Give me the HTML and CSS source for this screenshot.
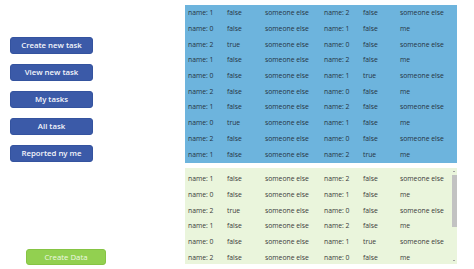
FILE: index.html
```html
<!DOCTYPE html>
<html>
<head>
<meta charset="utf-8">
<link rel="stylesheet" href="styles.css">
</head>
<body>
<div class="page">
  <aside class="sidebar">
    <button class="nav-btn">Create new task</button>
    <button class="nav-btn">View new task</button>
    <button class="nav-btn">My tasks</button>
    <button class="nav-btn">All task</button>
    <button class="nav-btn">Reported ny me</button>
    <button class="create-btn">Create Data</button>
  </aside>
  <main class="main">
    <div class="panel panel-blue">
      <div class="row"><span>name: 1</span><span>false</span><span>someone else</span><span>name: 2</span><span>false</span><span>someone else</span></div>
      <div class="row"><span>name: 0</span><span>false</span><span>someone else</span><span>name: 1</span><span>false</span><span>me</span></div>
      <div class="row"><span>name: 2</span><span>true</span><span>someone else</span><span>name: 0</span><span>false</span><span>someone else</span></div>
      <div class="row"><span>name: 1</span><span>false</span><span>someone else</span><span>name: 2</span><span>false</span><span>me</span></div>
      <div class="row"><span>name: 0</span><span>false</span><span>someone else</span><span>name: 1</span><span>true</span><span>someone else</span></div>
      <div class="row"><span>name: 2</span><span>false</span><span>someone else</span><span>name: 0</span><span>false</span><span>me</span></div>
      <div class="row"><span>name: 1</span><span>false</span><span>someone else</span><span>name: 2</span><span>false</span><span>someone else</span></div>
      <div class="row"><span>name: 0</span><span>true</span><span>someone else</span><span>name: 1</span><span>false</span><span>me</span></div>
      <div class="row"><span>name: 2</span><span>false</span><span>someone else</span><span>name: 0</span><span>false</span><span>someone else</span></div>
      <div class="row"><span>name: 1</span><span>false</span><span>someone else</span><span>name: 2</span><span>true</span><span>me</span></div>
    </div>
    <div class="panel panel-green">
      <div class="row"><span>name: 1</span><span>false</span><span>someone else</span><span>name: 2</span><span>false</span><span>someone else</span></div>
      <div class="row"><span>name: 0</span><span>false</span><span>someone else</span><span>name: 1</span><span>false</span><span>me</span></div>
      <div class="row"><span>name: 2</span><span>true</span><span>someone else</span><span>name: 0</span><span>false</span><span>someone else</span></div>
      <div class="row"><span>name: 1</span><span>false</span><span>someone else</span><span>name: 2</span><span>false</span><span>me</span></div>
      <div class="row"><span>name: 0</span><span>false</span><span>someone else</span><span>name: 1</span><span>true</span><span>someone else</span></div>
      <div class="row"><span>name: 2</span><span>false</span><span>someone else</span><span>name: 0</span><span>false</span><span>me</span></div>
      <div class="scrollbar">
        <span class="scroll-arrow scroll-up"></span>
        <span class="scroll-thumb"></span>
        <span class="scroll-arrow scroll-down"></span>
      </div>
    </div>
  </main>
</div>
</body>
</html>
```
FILE: styles.css
```css
* { box-sizing: border-box; }
html, body {
  margin: 0;
  padding: 0;
  background: #ffffff;
}
body {
  font-family: "Open Sans", "Noto Sans", sans-serif;
  width: 474px;
  height: 269px;
  overflow: hidden;
}
.page {
  display: flex;
  height: 269px;
}
.sidebar {
  width: 184.5px;
  flex: none;
  display: flex;
  flex-direction: column;
  align-items: flex-start;
  gap: 10px;
  padding: 37px 0 4px 10px;
}
.nav-btn {
  width: 83px;
  height: 17px;
  margin: 0;
  padding: 0;
  border: 1px solid #34539f;
  border-radius: 3px;
  background: #3b5aa8;
  color: #f4f6fb;
  font-family: "Open Sans", "Noto Sans", sans-serif;
  font-size: 7.8px;
  font-weight: 600;
  line-height: 15px;
  text-align: center;
}
.create-btn {
  margin: auto 0 0 16px;
  width: 80px;
  height: 16px;
  padding: 0;
  border: 1px solid #86c444;
  border-radius: 3px;
  background: #92d050;
  color: #eef8e4;
  font-family: "Open Sans", "Noto Sans", sans-serif;
  font-size: 7.8px;
  font-weight: 400;
  line-height: 14px;
  text-align: center;
}
.main {
  display: flex;
  flex-direction: column;
  gap: 5px;
  padding-top: 5px;
}
.panel {
  width: 272px;
  font-size: 6.8px;
  color: #333333;
}
.panel-blue {
  background: #6db4dd;
  height: 158px;
  color: #26333f;
}
.panel-green {
  position: relative;
  background: #eaf5dc;
  height: 96px;
  padding-top: 3px;
  overflow: hidden;
  color: #3a3a3a;
}
.scrollbar {
  position: absolute;
  top: 0;
  right: 0;
  bottom: 0;
  width: 5px;
  display: flex;
  flex-direction: column;
}
.scroll-arrow {
  height: 6px;
  flex: none;
  position: relative;
}
.scroll-arrow::after {
  content: "";
  position: absolute;
  left: 1.5px;
  width: 2px;
  height: 1px;
  background: #a0a0a0;
}
.scroll-up::after { top: 3px; }
.scroll-down::after { bottom: 3px; }
.scroll-thumb {
  height: 52px;
  margin: 1px 0 0 0;
  background: #c2c2c2;
}
.scroll-down { margin-top: auto; }
.row {
  display: grid;
  grid-template-columns: 39px 38px 59px 39px 37px auto;
  height: 15.7px;
  align-items: center;
  padding-left: 3.5px;
  white-space: nowrap;
}
```
